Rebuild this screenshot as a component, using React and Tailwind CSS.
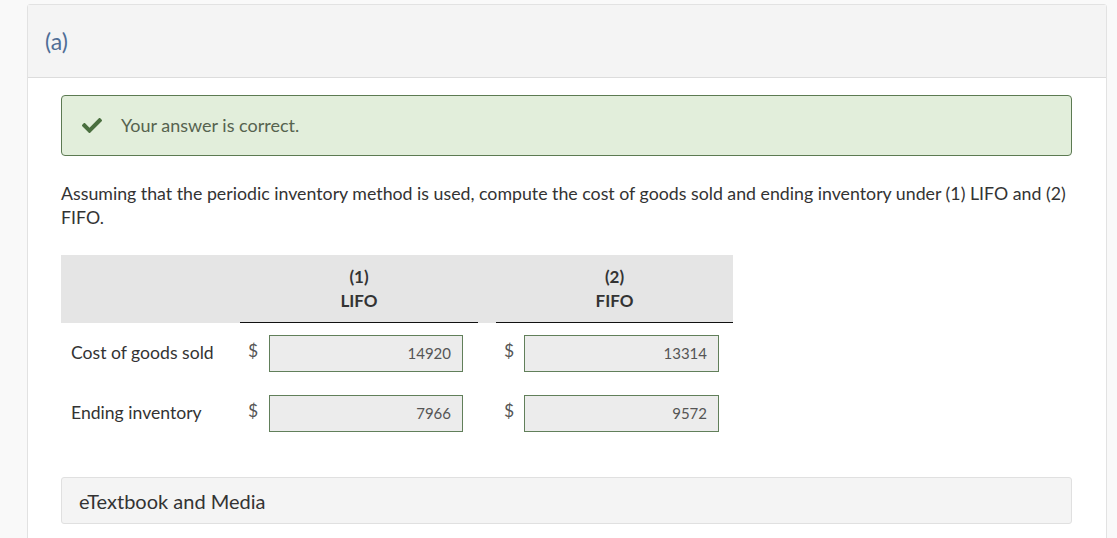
export default function App() {
  const rows = [
    { label: 'Cost of goods sold', lifo: '14920', fifo: '13314' },
    { label: 'Ending inventory', lifo: '7966', fifo: '9572' },
  ]

  return (
    <div className="min-h-[538px] bg-[#f9f9f9] pt-[4px] pl-[27px] pr-[10px]" style={{ fontFamily: 'Lato, "Open Sans", sans-serif' }}>
      <div className="w-[1080px] border border-[#e2e2e2] rounded-t-[3px] bg-white min-h-[540px]">
        {/* part header */}
        <div className="h-[73px] bg-[#f4f4f4] border-b border-[#dcdcdc] flex items-center pl-[17px]">
          <span className="text-[23px] text-[#4f6d96]">(a)</span>
        </div>

        <div className="px-[33px] pt-[17px]">
          {/* correct banner */}
          <div className="h-[61px] w-[1011px] bg-[#e2eedb] border border-[#5c7a52] rounded-[4px] flex items-center pl-[20px]">
            <svg width="20" height="15" viewBox="0 64 512 384" className="text-[#4a6f3f]" fill="currentColor">
              <path d="M173.898 439.404l-166.4-166.4c-9.997-9.997-9.997-26.206 0-36.204l36.203-36.204c9.997-9.998 26.207-9.998 36.204 0L192 312.69 432.095 72.596c9.997-9.997 26.207-9.997 36.204 0l36.203 36.204c9.997 9.997 9.997 26.206 0 36.204l-294.4 294.401c-9.998 9.997-26.207 9.997-36.204-.001z" />
            </svg>
            <span className="ml-[19px] text-[18px] text-[#56634f]">Your answer is correct.</span>
          </div>

          {/* question */}
          <p className="mt-[25px] w-[1011px] text-[17.75px] leading-[24px] text-[#333]">
            Assuming that the periodic inventory method is used, compute the cost of goods sold and ending inventory under (1) LIFO and (2) FIFO.
          </p>

          {/* table */}
          <div className="mt-[26px] w-[672px]">
            <div className="grid grid-cols-[179px_238px_18px_237px] h-[68px] bg-[#e5e5e5]">
              <div />
              <div className="border-b border-[#111] flex flex-col items-center justify-center text-[17px] leading-[24px] font-bold text-[#333]">
                <span>(1)</span>
                <span>LIFO</span>
              </div>
              <div />
              <div className="border-b border-[#111] flex flex-col items-center justify-center text-[17px] leading-[24px] font-bold text-[#333]">
                <span>(2)</span>
                <span>FIFO</span>
              </div>
            </div>

            {rows.map((r) => (
              <div key={r.label} className="grid grid-cols-[179px_238px_18px_237px] h-[60px] items-center">
                <div className="pl-[10px] text-[17.6px] text-[#333]">{r.label}</div>
                <div className="flex items-center">
                  <span className="w-[29px] pl-[8px] text-[17.5px] text-[#555] -mt-[3px]">$</span>
                  <div className="w-[194px] h-[37px] bg-[#ececec] border border-[#617f5a] flex items-center justify-end pr-[11px] text-[15px] text-[#555]">
                    {r.lifo}
                  </div>
                </div>
                <div />
                <div className="flex items-center">
                  <span className="w-[28px] pl-[8px] text-[17.5px] text-[#555] -mt-[3px]">$</span>
                  <div className="w-[195px] h-[37px] bg-[#ececec] border border-[#617f5a] flex items-center justify-end pr-[11px] text-[15px] text-[#555]">
                    {r.fifo}
                  </div>
                </div>
              </div>
            ))}
          </div>

          {/* eTextbook */}
          <div className="mt-[34px] w-[1011px] h-[47px] bg-[#f4f4f4] border border-[#e0e0e0] rounded-[3px] flex items-center pl-[17px]">
            <span className="text-[20px] text-[#333]">eTextbook and Media</span>
          </div>
        </div>
      </div>
    </div>
  )
}
